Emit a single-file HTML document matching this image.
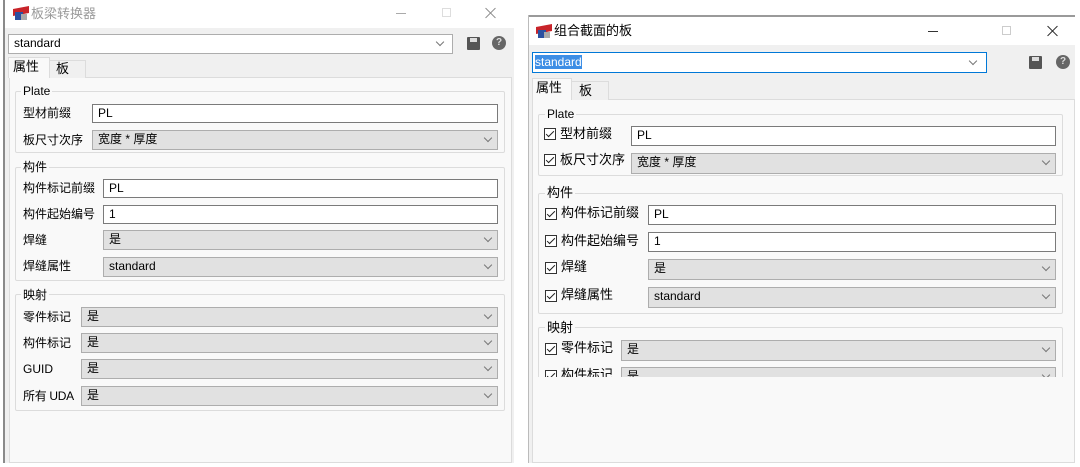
<!DOCTYPE html>
<html><head><meta charset="utf-8"><style>
*{margin:0;padding:0;box-sizing:border-box}
body{width:1080px;height:467px;background:#fff;position:relative;overflow:hidden;font-family:"Liberation Sans","Noto Sans CJK SC",sans-serif;font-size:12px;color:#000}
div,span{position:absolute}
.t{white-space:nowrap;line-height:14px;font-size:12px}
.in{background:#fff;border:1px solid #7a7a7a;padding-left:5px;line-height:17px}
.sel{background:#e1e1e1;border:1px solid #adadad;padding-left:5px;line-height:17px}
.sel:after{content:"";position:absolute;right:6px;top:4px;width:5px;height:5px;border-right:1px solid #777;border-bottom:1px solid #777;transform:rotate(45deg)}
.grp{border:1px solid #dcdcdc;border-radius:2px}
.lg{background:#f0f0f0;padding:0 2px;line-height:14px}
.cb{width:12px;height:12px;border:1px solid #333;background:#fff}
.cb:after{content:"";position:absolute;left:3px;top:0px;width:3px;height:7px;border-right:1.5px solid #222;border-bottom:1.5px solid #222;transform:rotate(45deg)}
.ico{width:16px;height:14px}
.ico .a{left:0;top:0;width:16px;height:10px;background:#c8242a;clip-path:polygon(0 30%,100% 0,100% 70%,0 100%)}
.ico .b{left:2px;top:6px;width:8px;height:8px;background:#2a4fa0}
.ico .c{left:8px;top:8px;width:6px;height:6px;background:#aaa}
.save{width:13px;height:13px;background:#555;border-radius:1px}
.save:before{content:"";position:absolute;left:3px;top:1px;width:7px;height:4px;background:#ddd}
.help{width:14px;height:14px;border-radius:50%;background:#666;color:#ddd;font-size:10px;text-align:center;line-height:14px;font-weight:bold}
.x{width:12px;height:12px}
.x:before,.x:after{content:"";position:absolute;left:5px;top:-1px;width:1px;height:14px;background:currentColor;transform:rotate(45deg)}
.x:after{transform:rotate(-45deg)}
</style></head><body>

<!-- LEFT WINDOW -->
<div style="left:3px;top:0;width:2px;height:463px;background:#8a8a8a"></div>
<div style="left:5px;top:0;width:509px;height:28px;background:#fff"></div>
<div class="ico" style="left:13px;top:6px"><span class="a"></span><span class="b"></span><span class="c"></span></div>
<div class="t" style="left:31px;top:7px;color:#9a9a9a;font-size:13px">板梁转换器</div>
<div style="left:396px;top:13px;width:10px;height:1px;background:#aaa"></div>
<div style="left:442px;top:8px;width:9px;height:9px;border:1px solid #ddd"></div>
<div class="x" style="left:485px;top:7px;color:#888"></div>
<div style="left:5px;top:28px;width:509px;height:435px;background:#f0f0f0"></div>
<div class="in" style="left:8px;top:34px;width:445px;height:20px;border-color:#adadad">standard</div>
<div class="sel" style="left:437px;top:35px;width:12px;height:18px;background:#fff;border:none"></div>
<div class="save" style="left:467px;top:37px"></div>
<div class="help" style="left:492px;top:36px">?</div>
<div style="left:9px;top:77px;width:503px;height:386px;background:#f9f9f9;border:1px solid #dcdcdc"></div>
<div style="left:49px;top:60px;width:37px;height:18px;background:#f0f0f0;border:1px solid #dcdcdc;border-bottom:none"></div>
<div class="t" style="left:56px;top:62px;font-size:13px">板</div>
<div style="left:8px;top:57px;width:42px;height:21px;background:#f9f9f9;border:1px solid #dcdcdc;border-bottom:none"></div>
<div class="t" style="left:13px;top:60px;font-size:13px">属性</div>

<div class="grp" style="left:15px;top:91px;width:490px;height:62px"></div>
<div class="t lg" style="left:21px;top:84px;background:#f9f9f9">Plate</div>
<div class="t" style="left:23px;top:106px">型材前缀</div>
<div class="in" style="left:92px;top:104px;width:406px;height:19px">PL</div>
<div class="t" style="left:23px;top:133px">板尺寸次序</div>
<div class="sel" style="left:92px;top:130px;width:406px;height:20px">宽度 * 厚度</div>

<div class="grp" style="left:15px;top:167px;width:490px;height:114px"></div>
<div class="t lg" style="left:21px;top:160px;background:#f9f9f9">构件</div>
<div class="t" style="left:23px;top:181px">构件标记前缀</div>
<div class="in" style="left:103px;top:179px;width:395px;height:19px">PL</div>
<div class="t" style="left:23px;top:207px">构件起始编号</div>
<div class="in" style="left:103px;top:205px;width:395px;height:19px">1</div>
<div class="t" style="left:23px;top:233px">焊缝</div>
<div class="sel" style="left:103px;top:230px;width:395px;height:20px">是</div>
<div class="t" style="left:23px;top:259px">焊缝属性</div>
<div class="sel" style="left:103px;top:257px;width:395px;height:20px">standard</div>

<div class="grp" style="left:15px;top:294px;width:490px;height:117px"></div>
<div class="t lg" style="left:21px;top:288px;background:#f9f9f9">映射</div>
<div class="t" style="left:23px;top:310px">零件标记</div>
<div class="sel" style="left:81px;top:307px;width:417px;height:20px">是</div>
<div class="t" style="left:23px;top:336px">构件标记</div>
<div class="sel" style="left:81px;top:333px;width:417px;height:20px">是</div>
<div class="t" style="left:23px;top:362px">GUID</div>
<div class="sel" style="left:81px;top:359px;width:417px;height:20px">是</div>
<div class="t" style="left:23px;top:389px;letter-spacing:-0.3px">所有 UDA</div>
<div class="sel" style="left:81px;top:386px;width:417px;height:20px">是</div>

<!-- RIGHT WINDOW -->
<div style="left:528px;top:15px;width:547px;height:2px;background:#9a9a9a"></div>
<div style="left:528px;top:15px;width:1px;height:448px;background:#bbb"></div>
<div style="left:529px;top:17px;width:546px;height:28px;background:#fff"></div>
<div class="ico" style="left:536px;top:24px"><span class="a"></span><span class="b"></span><span class="c"></span></div>
<div class="t" style="left:554px;top:24px;font-size:13px">组合截面的板</div>
<div style="left:928px;top:31px;width:10px;height:1px;background:#333"></div>
<div style="left:1002px;top:26px;width:9px;height:9px;border:1px solid #ccc"></div>
<div class="x" style="left:1047px;top:25px;color:#222"></div>
<div style="left:529px;top:45px;width:546px;height:418px;background:#f0f0f0"></div>
<div class="in" style="left:532px;top:52px;width:455px;height:21px;border-color:#0078d7;padding-left:2px;line-height:19px"><span style="position:static;background:#3d8ee5;color:#fff">standard</span></div>
<div class="sel" style="left:970px;top:54px;width:12px;height:17px;background:#fff;border:none"></div>
<div class="save" style="left:1029px;top:56px"></div>
<div class="help" style="left:1056px;top:55px">?</div>
<div style="left:532px;top:99px;width:543px;height:364px;background:#f9f9f9;border:1px solid #dcdcdc"></div>
<div style="left:571px;top:81px;width:38px;height:19px;background:#f0f0f0;border:1px solid #dcdcdc;border-bottom:none"></div>
<div class="t" style="left:579px;top:84px;font-size:13px">板</div>
<div style="left:532px;top:78px;width:40px;height:22px;background:#f9f9f9;border:1px solid #dcdcdc;border-bottom:none"></div>
<div class="t" style="left:536px;top:81px;font-size:13px">属性</div>

<div class="grp" style="left:538px;top:114px;width:525px;height:62px"></div>
<div class="t lg" style="left:545px;top:107px;background:#f9f9f9">Plate</div>
<div class="cb" style="left:544px;top:128px"></div>
<div class="t" style="left:560px;top:127px;font-size:13px">型材前缀</div>
<div class="in" style="left:631px;top:126px;width:425px;height:20px">PL</div>
<div class="cb" style="left:544px;top:154px"></div>
<div class="t" style="left:560px;top:153px;font-size:13px">板尺寸次序</div>
<div class="sel" style="left:631px;top:153px;width:425px;height:21px">宽度 * 厚度</div>

<div class="grp" style="left:538px;top:193px;width:525px;height:121px"></div>
<div class="t lg" style="left:545px;top:186px;background:#f9f9f9;font-size:13px">构件</div>
<div class="cb" style="left:545px;top:208px"></div>
<div class="t" style="left:561px;top:206px;font-size:13px">构件标记前缀</div>
<div class="in" style="left:648px;top:205px;width:408px;height:20px">PL</div>
<div class="cb" style="left:545px;top:235px"></div>
<div class="t" style="left:561px;top:234px;font-size:13px">构件起始编号</div>
<div class="in" style="left:648px;top:232px;width:408px;height:20px">1</div>
<div class="cb" style="left:545px;top:262px"></div>
<div class="t" style="left:561px;top:260px;font-size:13px">焊缝</div>
<div class="sel" style="left:648px;top:259px;width:408px;height:21px">是</div>
<div class="cb" style="left:545px;top:290px"></div>
<div class="t" style="left:561px;top:288px;font-size:13px">焊缝属性</div>
<div class="sel" style="left:648px;top:287px;width:408px;height:21px">standard</div>

<div style="left:533px;top:320px;width:541px;height:57px;overflow:hidden">
  <div class="grp" style="left:5px;top:7px;width:525px;height:100px"></div>
  <div class="t lg" style="left:12px;top:1px;background:#f9f9f9;font-size:13px">映射</div>
  <div class="cb" style="left:12px;top:23px"></div>
  <div class="t" style="left:28px;top:21px;font-size:13px">零件标记</div>
  <div class="sel" style="left:88px;top:20px;width:435px;height:21px">是</div>
  <div class="cb" style="left:12px;top:50px"></div>
  <div class="t" style="left:28px;top:48px;font-size:13px">构件标记</div>
  <div class="sel" style="left:88px;top:47px;width:435px;height:21px">是</div>
</div>

</body></html>
